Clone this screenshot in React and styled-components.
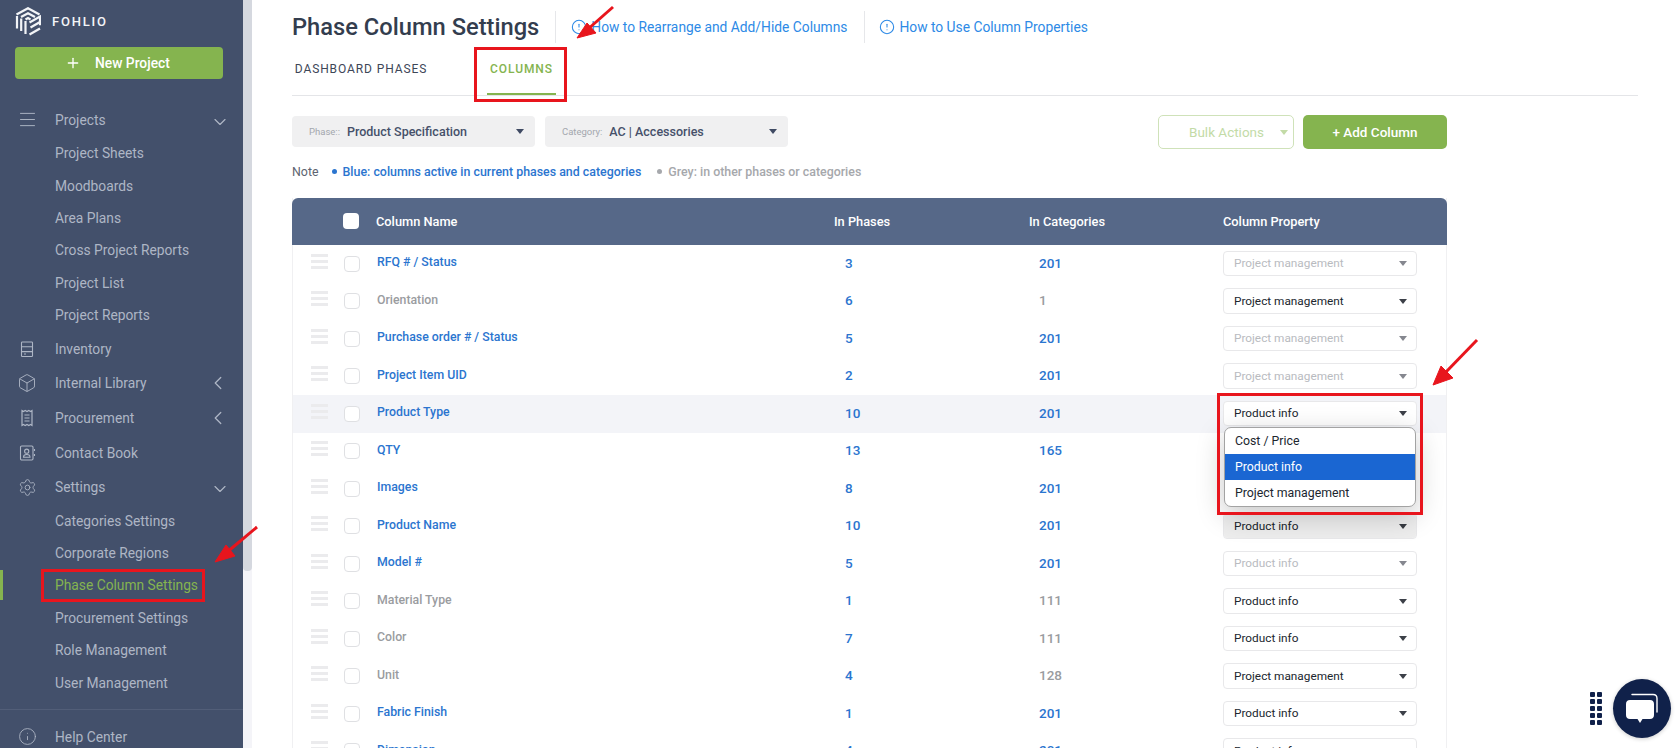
import React from 'react';
import styled, { createGlobalStyle } from 'styled-components';
import { Box, ChevronDown, ChevronLeft, CircleAlert, Info, Menu, Plus, Settings } from 'lucide-react';

const Global = createGlobalStyle`
  html, body { margin: 0; padding: 0; height: 100%; overflow: hidden; background: #fff; }
  body { font-family: Roboto, "Liberation Sans", sans-serif; }
  * { box-sizing: border-box; }
`;

const Shell = styled.div`
  position: relative;
  display: flex;
  width: 1675px;
  height: 748px;
  overflow: hidden;
`;
const Sidebar = styled.aside`
  flex: 0 0 243px;
  background: #43506b;
  display: flex;
  flex-direction: column;
  padding-top: 6px;
  overflow: hidden;
  & > * { flex-shrink: 0; }
`;
const Brand = styled.div`
  display: flex;
  align-items: center;
  gap: 11px;
  padding-left: 15px;
  height: 31px;
  color: #f3f5f8;
  font-size: 13px;
  font-weight: 500;
  letter-spacing: 1.8px;
`;
const NewProject = styled.div`
  margin: 10px 20px 0 15px;
  height: 32px;
  border-radius: 4px;
  background: #85b44f;
  color: #fff;
  font-size: 13.8px;
  font-weight: 500;
  display: flex;
  align-items: center;
  padding-left: 50px;
  gap: 14px;
`;
const Nav = styled.nav`
  display: flex;
  flex-direction: column;
  margin-top: 23.5px;
`;
const Item = styled.div`
  position: relative;
  flex-shrink: 0;
  height: ${p => p.$h}px;
  display: flex;
  align-items: center;
  padding-left: 55px;
  color: ${p => (p.$active ? '#85b44f' : '#aeb6c5')};
  font-size: 13.8px;
  ${p => p.$active && `
    &::before {
      content: '';
      position: absolute;
      left: 0;
      top: 1px;
      width: 3px;
      height: 30px;
      background: #85b44f;
    }
  `}
`;
const ItemIcon = styled.span`
  position: absolute;
  left: 15px;
  top: 50%;
  width: 24px;
  height: 24px;
  margin-top: -12px;
  display: flex;
  align-items: center;
  justify-content: center;
  color: #aeb6c5;
`;
const Caret = styled.span`
  position: absolute;
  left: ${p => p.$x}px;
  top: 50%;
  transform: translateY(-50%);
  margin-top: ${p => p.$dy}px;
  display: flex;
  color: #aeb6c5;
`;
const SideDivider = styled.div`
  height: 1px;
  background: #525e78;
  margin-top: 10px;
`;
const Help = styled(Item)`
  margin-top: 9px;
`;
const ScrollTrack = styled.div`
  flex: 0 0 9px;
  background: #f4f4f8;
  display: flex;
  flex-direction: column;
`;
const ScrollThumb = styled.div`
  height: 571px;
  background: #d5d8df;
  border-radius: 0 0 4px 4px;
`;
const Main = styled.main`
  flex: 1;
  min-width: 0;
  padding: 0 37px 0 40px;
`;
const TitleRow = styled.div`
  display: flex;
  align-items: center;
  height: 55px;
  padding: 5px 0 6px;
`;
const Title = styled.h1`
  margin: 0;
  font-size: 23.7px;
  font-weight: 500;
  color: #333d4e;
  white-space: nowrap;
`;
const HelpLink = styled.a`
  display: flex;
  align-items: center;
  gap: 4px;
  height: 32px;
  color: #2d8ae6;
  font-size: 13.8px;
  white-space: nowrap;
  padding-left: ${p => (p.$first ? 15 : 14)}px;
  ${p => p.$first && `
    margin-left: 16px;
    padding-right: 17px;
    border-left: 1px solid #e6e7ea;
    border-right: 1px solid #e6e7ea;
  `}
`;
const Tabs = styled.div`
  display: flex;
  height: 41px;
  border-bottom: 1px solid #e4e5e8;
`;
const Tab = styled.div`
  height: 40px;
  width: ${p => p.$w}px;
  margin-left: ${p => p.$ml}px;
  padding-top: 7px;
  text-align: center;
  white-space: nowrap;
  font-size: 12px;
  letter-spacing: ${p => (p.$active ? 0.9 : 0.9)}px;
  font-weight: ${p => (p.$active ? 500 : 400)};
  color: ${p => (p.$active ? '#85b44f' : '#3d4657')};
  border-bottom: 2px solid ${p => (p.$active ? '#85b44f' : 'transparent')};
`;
const Toolbar = styled.div`
  display: flex;
  align-items: flex-start;
  margin-top: 19px;
  width: 1155px;
`;
const FilterSelect = styled.div`
  position: relative;
  width: 243px;
  height: 31px;
  margin-top: 0.5px;
  margin-right: 10px;
  background: #f0f0f1;
  border-radius: 4px;
  display: flex;
  align-items: center;
  padding-left: 17px;
`;
const FilterLabel = styled.span`
  font-size: 9.5px;
  color: #a3a7ae;
  margin-right: 7px;
`;
const FilterValue = styled.span`
  font-size: 12.5px;
  font-weight: 500;
  color: #46506a;
`;
const Tri = styled.span`
  position: absolute;
  right: ${p => p.$r}px;
  top: 50%;
  margin-top: -2px;
  width: 0;
  height: 0;
  border-left: 4.5px solid transparent;
  border-right: 4.5px solid transparent;
  border-top: 5px solid ${p => p.$c};
`;
const Spacer = styled.div`
  flex: 1;
`;
const BulkButton = styled.div`
  position: relative;
  width: 136px;
  height: 34px;
  border: 1px solid #cfe2b9;
  border-radius: 5px;
  color: #c3dba7;
  font-size: 13.5px;
  display: flex;
  align-items: center;
  padding-left: 30px;
  margin-right: 9px;
`;
const AddButton = styled.div`
  width: 144px;
  height: 34px;
  background: #85b44f;
  border-radius: 5px;
  color: #fff;
  font-size: 13.5px;
  font-weight: 500;
  display: flex;
  align-items: center;
  justify-content: center;
`;
const Note = styled.div`
  display: flex;
  align-items: center;
  margin-top: 13px;
  height: 18px;
  font-size: 12.4px;
  color: #5d6470;
`;
const Dot = styled.i`
  display: inline-block;
  width: 5px;
  height: 5px;
  border-radius: 50%;
  background: ${p => p.$c};
  margin: ${p => p.$m};
`;
const NoteText = styled.span`
  color: ${p => p.$c};
  font-weight: 500;
`;
const Table = styled.div`
  position: relative;
  margin-top: 18px;
  width: 1155px;
  border-left: 1px solid #f0f0f2;
  border-right: 1px solid #f0f0f2;
`;
const rowGrid = `
  display: grid;
  grid-template-columns: 51px 33px 458px 195px 194px 1fr;
  align-items: center;
`;
const Head = styled.div`
  ${rowGrid}
  margin: 0 -1px;
  height: 47px;
  background: #566888;
  border-radius: 6px 6px 0 0;
  color: #fff;
  font-size: 12.8px;
  font-weight: 500;
`;
const Row = styled.div`
  ${rowGrid}
  height: 37.5px;
  background: ${p => (p.$hl ? '#f3f4f8' : 'transparent')};
`;
const Grip = styled.span`
  justify-self: end;
  width: 17px;
  margin-right: 16px;
  margin-top: -5px;
  display: flex;
  flex-direction: column;
  gap: 3px;
  i {
    display: block;
    height: 3px;
    background: #ebebed;
  }
`;
const Check = styled.span`
  display: block;
  width: 16px;
  height: 16px;
  border-radius: 4px;
  border: 1px solid #dfe0e3;
  background: #fff;
`;
const HeadCheck = styled(Check)`
  margin-top: -1px;
  border: none;
`;
const Name = styled.span`
  font-size: 12.3px;
  font-weight: 500;
  color: ${p => (p.$on ? '#2b75cf' : '#9a9c9f')};
  margin-top: -3px;
`;
const Num = styled.span`
  font-size: 13.5px;
  font-weight: 500;
  margin-top: -2px;
  padding-left: ${p => p.$pl}px;
  color: ${p => (p.$on ? '#2b75cf' : '#9a9c9f')};
`;
const RowSelect = styled.div`
  position: relative;
  margin: -1px 0 0 -1px;
  width: 194px;
  height: 25.5px;
  border: 1px solid #e8e8ea;
  border-radius: 4px;
  background: #fff;
  display: flex;
  align-items: center;
  padding-left: 10px;
  font-size: 11.8px;
  color: ${p => (p.$off ? '#b9bbbf' : '#20262e')};
`;
const Shade = styled.div`
  position: absolute;
  inset: 0;
  background: rgba(0, 0, 0, 0.07);
  border-radius: 4px;
`;
const Dropdown = styled.div`
  position: absolute;
  left: 931px;
  top: 229px;
  width: 192px;
  height: 80px;
  background: #fff;
  border-radius: 7px;
  border: 1px solid #a3a3a3;
  overflow: hidden;
  box-shadow: 0 8px 28px rgba(0, 0, 0, 0.22);
  z-index: 2;
  display: flex;
  flex-direction: column;
`;
const Option = styled.div`
  flex: 1;
  display: flex;
  align-items: center;
  padding-left: 10px;
  font-size: 12.3px;
  color: ${p => (p.$sel ? '#fff' : '#20262e')};
  background: ${p => (p.$sel ? '#1a66d2' : 'transparent')};
`;
const RedBox = styled.div`
  position: absolute;
  left: ${p => p.$x}px;
  top: ${p => p.$y}px;
  width: ${p => p.$w}px;
  height: ${p => p.$h}px;
  border: 3px solid #e8151d;
  z-index: 5;
`;
const Overlay = styled.svg`
  position: absolute;
  inset: 0;
  z-index: 6;
  pointer-events: none;
`;
const Chat = styled.div`
  position: absolute;
  left: 1590px;
  top: 679px;
  display: flex;
  align-items: center;
  gap: 11px;
  z-index: 7;
`;
const Dots = styled.div`
  display: grid;
  grid-template-columns: 5px 5px;
  gap: 2px 2px;
  grid-auto-rows: 5px;
`;
const ChatDot = styled.i`
  display: block;
  background: #10214a;
  border-radius: 1px;
`;
const ChatBubble = styled.div`
  width: 58px;
  height: 59px;
  border-radius: 50%;
  background: #10214a;
  box-shadow: 0 1px 4px rgba(0, 0, 0, 0.2);
  display: flex;
`;

const LogoMark = () => (
  <svg width="26" height="29" viewBox="0 0 26 29" fill="none" stroke="#f2f4f7" strokeWidth="2.2" strokeLinejoin="miter">
    <path d="M1.5 7.5 13 1.2 24.5 7.5" />
    <path d="M6 10 13 6.2 20 10" />
    <path d="M10.5 12.5 13 11 15.5 12.5" />
    <path d="M2 9V21.5M6.2 11.5V24M10.5 14V27" />
    <path d="M14.5 27.5 25 21.5" />
    <path d="M14.5 15.5 25 9.5V18.2" />
    <path d="M15.5 20.5 25 15" />
  </svg>
);
const InventoryIcon = () => (
  <svg width="16" height="18" viewBox="0 0 16 18" fill="none" stroke="currentColor" strokeWidth="1.1">
    <rect x="2.5" y="2" width="11" height="14.5" rx="0.8" />
    <path d="M2.5 6.8H13.5M2.5 11.6H13.5M5 14H7" />
  </svg>
);
const ReceiptIcon = () => (
  <svg width="16" height="18" viewBox="0 0 16 18" fill="none" stroke="currentColor" strokeWidth="1.2">
    <path d="M3 1.5 4.5 2.5 6.2 1.5 8 2.5 9.8 1.5 11.5 2.5 13 1.5V16.5L11.5 15.5 9.8 16.5 8 15.5 6.2 16.5 4.5 15.5 3 16.5Z" />
    <path d="M5.5 6H10.5M5.5 9H10.5M5.5 12H10.5" />
  </svg>
);
const ContactIcon = () => (
  <svg width="18" height="18" viewBox="0 0 18 18" fill="none" stroke="currentColor" strokeWidth="1.1">
    <rect x="2.5" y="2" width="12.5" height="14" rx="1.2" />
    <circle cx="8.7" cy="7.2" r="2.1" />
    <path d="M5.5 13.2C5.5 11.3 7 10.5 8.7 10.5S12 11.3 12 13.2Z" />
    <path d="M16.5 5V7M16.5 10V12" />
  </svg>
);

const sub = 32.4;
const main = 34.6;
const navItems = [
  { t: 'Projects', h: main, icon: <Menu size={21} strokeWidth={1.1} />, caret: 'down' },
  { t: 'Project Sheets', h: sub },
  { t: 'Moodboards', h: sub },
  { t: 'Area Plans', h: sub },
  { t: 'Cross Project Reports', h: sub },
  { t: 'Project List', h: sub },
  { t: 'Project Reports', h: sub },
  { t: 'Inventory', h: main, icon: <InventoryIcon /> },
  { t: 'Internal Library', h: main, icon: <Box size={20} strokeWidth={1.1} />, caret: 'left' },
  { t: 'Procurement', h: main, icon: <ReceiptIcon />, caret: 'left' },
  { t: 'Contact Book', h: main, icon: <ContactIcon /> },
  { t: 'Settings', h: main, icon: <Settings size={19} strokeWidth={1.1} />, caret: 'down' },
  { t: 'Categories Settings', h: sub },
  { t: 'Corporate Regions', h: sub },
  { t: 'Phase Column Settings', h: sub, active: true },
  { t: 'Procurement Settings', h: sub },
  { t: 'Role Management', h: sub },
  { t: 'User Management', h: sub },
];

const PM = 'Project management';
const PI = 'Product info';
const rows = [
  { n: 'RFQ # / Status', p: 3, c: 201, v: PM, on: true, off: true },
  { n: 'Orientation', p: 6, c: 1, v: PM },
  { n: 'Purchase order # / Status', p: 5, c: 201, v: PM, on: true, off: true },
  { n: 'Project Item UID', p: 2, c: 201, v: PM, on: true, off: true },
  { n: 'Product Type', p: 10, c: 201, v: PI, on: true, hl: true },
  { n: 'QTY', p: 13, c: 165, covered: true, on: true },
  { n: 'Images', p: 8, c: 201, covered: true, on: true },
  { n: 'Product Name', p: 10, c: 201, v: PI, on: true, shade: true },
  { n: 'Model #', p: 5, c: 201, v: PI, on: true, off: true },
  { n: 'Material Type', p: 1, c: 111, v: PI },
  { n: 'Color', p: 7, c: 111, v: PI },
  { n: 'Unit', p: 4, c: 128, v: PM },
  { n: 'Fabric Finish', p: 1, c: 201, v: PI, on: true },
  { n: 'Dimension', p: 4, c: 201, v: PI, on: true },
];

export default function App() {
  return (
    <Shell>
      <Global />
      <Sidebar>
        <Brand><LogoMark />FOHLIO</Brand>
        <NewProject><Plus size={16} strokeWidth={2} />New Project</NewProject>
        <Nav>
          {navItems.map(it => (
            <Item key={it.t} $h={it.h} $active={it.active}>
              {it.icon && <ItemIcon>{it.icon}</ItemIcon>}
              {it.t}
              {it.caret === 'down' && <Caret $x={210} $dy={2}><ChevronDown size={20} strokeWidth={1.4} /></Caret>}
              {it.caret === 'left' && <Caret $x={207} $dy={0}><ChevronLeft size={22} strokeWidth={1.4} /></Caret>}
            </Item>
          ))}
        </Nav>
        <SideDivider />
        <Help $h={36}>
          <ItemIcon><Info size={19} strokeWidth={1.1} /></ItemIcon>
          Help Center
        </Help>
      </Sidebar>
      <ScrollTrack><ScrollThumb /></ScrollTrack>
      <Main>
        <TitleRow>
          <Title>Phase Column Settings</Title>
          <HelpLink $first><CircleAlert size={16} strokeWidth={1.6} />How to Rearrange and Add/Hide Columns</HelpLink>
          <HelpLink><CircleAlert size={16} strokeWidth={1.6} />How to Use Column Properties</HelpLink>
        </TitleRow>
        <Tabs>
          <Tab $w={138} $ml={0}>DASHBOARD PHASES</Tab>
          <Tab $w={69} $ml={57} $active>COLUMNS</Tab>
        </Tabs>
        <Toolbar>
          <FilterSelect>
            <FilterLabel>Phase::</FilterLabel>
            <FilterValue>Product Specification</FilterValue>
            <Tri $r={11} $c="#3f4a63" />
          </FilterSelect>
          <FilterSelect>
            <FilterLabel>Category:</FilterLabel>
            <FilterValue>AC | Accessories</FilterValue>
            <Tri $r={11} $c="#3f4a63" />
          </FilterSelect>
          <Spacer />
          <BulkButton>Bulk Actions<Tri $r={5} $c="#c3dba7" /></BulkButton>
          <AddButton>+ Add Column</AddButton>
        </Toolbar>
        <Note>
          Note
          <Dot $c="#2b75cf" $m="0 6px 0 13px" />
          <NoteText $c="#2b75cf">Blue: columns active in current phases and categories</NoteText>
          <Dot $c="#a6a8ac" $m="0 6px 0 16px" />
          <NoteText $c="#a6a8ac">Grey: in other phases or categories</NoteText>
        </Note>
        <Table>
          <Head>
            <span />
            <HeadCheck />
            <span>Column Name</span>
            <span>In Phases</span>
            <span>In Categories</span>
            <span>Column Property</span>
          </Head>
          {rows.map(r => (
            <Row key={r.n} $hl={r.hl}>
              <Grip><i /><i /><i /></Grip>
              <Check />
              <Name $on={r.on}>{r.n}</Name>
              <Num $on $pl={10}>{r.p}</Num>
              <Num $on={r.on} $pl={9}>{r.c}</Num>
              {!r.covered && (
                <RowSelect $off={r.off}>
                  {r.v}
                  <Tri $r={9} $c={r.off ? '#85878f' : '#3c4048'} />
                  {r.shade && <Shade />}
                </RowSelect>
              )}
            </Row>
          ))}
          <Dropdown>
            <Option>Cost / Price</Option>
            <Option $sel>Product info</Option>
            <Option>Project management</Option>
          </Dropdown>
        </Table>
      </Main>

      <RedBox $x={41} $y={569} $w={164} $h={33} />
      <RedBox $x={474} $y={47} $w={93} $h={55} />
      <RedBox $x={1217} $y={393} $w={206} $h={122} />
      <Overlay width="1675" height="748" viewBox="0 0 1675 748">
        <g stroke="#e8151d" strokeWidth="3" fill="#e8151d">
          <path d="M613 7 587 30" />
          <path d="M577 38 596 33 587 23Z" strokeWidth="1" />
          <path d="M257 527 226 553" />
          <path d="M215 562 235 556 226 545Z" strokeWidth="1" />
          <path d="M1477 340 1445 373" />
          <path d="M1433 385 1453 378 1441 366Z" strokeWidth="1" />
        </g>
      </Overlay>

      <Chat>
        <Dots>
          {Array.from({ length: 10 }, (_, i) => <ChatDot key={i} />)}
        </Dots>
        <ChatBubble>
          <svg width="58" height="59" viewBox="0 0 58 59">
            <path d="M19 15.5H40C42.5 15.5 44 17 44 19.5V33" fill="none" stroke="#fff" strokeWidth="1.4" strokeLinecap="round" />
            <path d="M17 21H37C39.5 21 41 22.5 41 25V36C41 38.5 39.5 40 37 40H29.5L27 44 24.5 40H17C14.5 40 13 38.5 13 36V25C13 22.5 14.5 21 17 21Z" fill="#fff" />
          </svg>
        </ChatBubble>
      </Chat>
    </Shell>
  );
}
